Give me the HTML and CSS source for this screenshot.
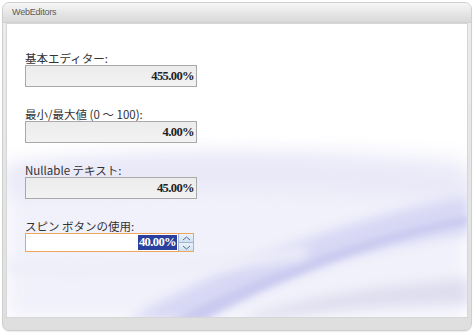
FILE: index.html
```html
<!DOCTYPE html>
<html lang="ja">
<head>
<meta charset="utf-8">
<title>WebEditors</title>
<link rel="stylesheet" href="styles.css">
</head>
<body>
<div class="window">
  <div class="titlebar">WebEditors</div>
  <div class="panel">
    <svg class="swoosh" width="461" height="296" viewBox="0 0 461 296" aria-hidden="true">
      <defs>
        <filter id="b1" x="-20%" y="-50%" width="140%" height="200%"><feGaussianBlur stdDeviation="10"/></filter>
        <filter id="b2" x="-20%" y="-50%" width="140%" height="200%"><feGaussianBlur stdDeviation="6"/></filter>
        <filter id="b3" x="-20%" y="-50%" width="140%" height="200%"><feGaussianBlur stdDeviation="3"/></filter>
      </defs>
      <path d="M0 150 C120 130 300 120 461 135 L461 296 L0 296 Z" fill="#f1f1fb" filter="url(#b1)"/>
      <path d="M0 140 C150 125 320 130 461 150 L461 178 C320 162 150 162 0 172 Z" fill="#e8e8f8" filter="url(#b1)"/>
      <path d="M120 296 C210 245 330 195 461 172 L461 210 C340 225 250 262 200 296 Z" fill="#d8d8f5" filter="url(#b2)"/>
      <path d="M165 296 C250 252 350 212 461 192 L461 200 C350 222 260 262 195 296 Z" fill="#cacaf0" filter="url(#b3)"/>
      <path d="M230 296 C300 272 380 260 461 255 L461 280 C380 280 300 288 260 296 Z" fill="#dedeef" filter="url(#b2)"/>
      <path d="M0 236 C80 242 200 238 300 222 L300 234 C200 250 80 255 0 250 Z" fill="#eeeef9" filter="url(#b2)"/>
    </svg>
    <div class="form">
      <div class="field">
        <div class="label">基本エディター:</div>
        <div class="box ro"><span class="val">455.00%</span></div>
      </div>
      <div class="field">
        <div class="label">最小/最大値 (0 ～ 100):</div>
        <div class="box ro"><span class="val">4.00%</span></div>
      </div>
      <div class="field">
        <div class="label">Nullable テキスト:</div>
        <div class="box ro"><span class="val">45.00%</span></div>
      </div>
      <div class="field">
        <div class="label">スピン ボタンの使用:</div>
        <div class="spinrow">
          <div class="box edit"><span class="val sel">40.00%</span></div>
          <div class="spin">
            <div class="sb"><svg width="9" height="5" viewBox="0 0 9 5"><path d="M1 4 L4.5 1 L8 4" fill="none" stroke="#5a6f8f" stroke-width="1"/></svg></div>
            <div class="sb"><svg width="9" height="5" viewBox="0 0 9 5"><path d="M1 1 L4.5 4 L8 1" fill="none" stroke="#5a6f8f" stroke-width="1"/></svg></div>
          </div>
        </div>
      </div>
    </div>
  </div>
</div>
</body>
</html>
```

FILE: styles.css
```css
html, body {
  margin: 0;
  padding: 0;
  background: #ffffff;
}
body {
  width: 474px;
  height: 333px;
  overflow: hidden;
}
.window {
  box-sizing: border-box;
  margin: 2px 0 0 2px;
  width: 470px;
  height: 329px;
  border: 1px solid #cfcfcf;
  border-radius: 7px;
  background: linear-gradient(#ececec, #dedede);
  padding: 0 3px 12px 3px;
  display: flex;
  flex-direction: column;
  box-shadow: 0 1px 1px rgba(0,0,0,0.08);
}
.titlebar {
  height: 19px;
  flex: none;
  font-family: "Liberation Sans", Arial, sans-serif;
  font-size: 9px;
  line-height: 19px;
  color: #5a5a5a;
  padding-left: 9px;
  background: linear-gradient(#f6f6f6, #e4e4e4 60%, #d9d9d9);
  margin: 0 -3px;
  border-radius: 6px 6px 0 0;
  border-bottom: 1px solid #d0d0d0;
  letter-spacing: -0.2px;
}
.panel {
  position: relative;
  flex: 1;
  background: #ffffff;
  border: 1px solid #d6d6d6;
  overflow: hidden;
}
.swoosh {
  position: absolute;
  left: 0;
  top: 0;
}
.form {
  position: relative;
  padding: 27px 0 0 18px;
  display: flex;
  flex-direction: column;
  gap: 20px;
}
.label {
  font-family: "Noto Sans CJK JP", "Noto Sans", sans-serif;
  font-size: 11.5px;
  line-height: 14px;
  color: #333333;
  height: 14px;
}
.box {
  box-sizing: border-box;
  height: 22px;
  width: 172px;
  border: 1px solid #a9a9a9;
  display: flex;
  align-items: center;
  justify-content: flex-end;
  padding-right: 2px;
}
.ro {
  background: linear-gradient(#ececec, #f2f2f2);
}
.val {
  font-family: "Liberation Serif", "Times New Roman", serif;
  font-weight: bold;
  font-size: 12.5px;
  color: #222222;
  letter-spacing: -0.6px;
}
.spinrow {
  display: flex;
  align-items: stretch;
  height: 19px;
  width: 169px;
  border: 1px solid #f1a45c;
  box-sizing: border-box;
  background: #ffffff;
}
.edit {
  flex: 1;
  height: auto;
  border: none;
  background: #ffffff;
  padding-right: 1px;
}
.sel {
  background: #2b3f9e;
  color: #ffffff;
  line-height: 15px;
  padding: 0 1px;
}
.spin {
  width: 14px;
  display: flex;
  flex-direction: column;
  border-left: 1px solid #9fb3cc;
}
.sb {
  flex: 1;
  display: flex;
  align-items: center;
  justify-content: center;
  background: linear-gradient(#eaf2fb, #cfe0f2);
  border-bottom: 1px solid #9fb3cc;
}
.sb:last-child {
  border-bottom: none;
}
```
